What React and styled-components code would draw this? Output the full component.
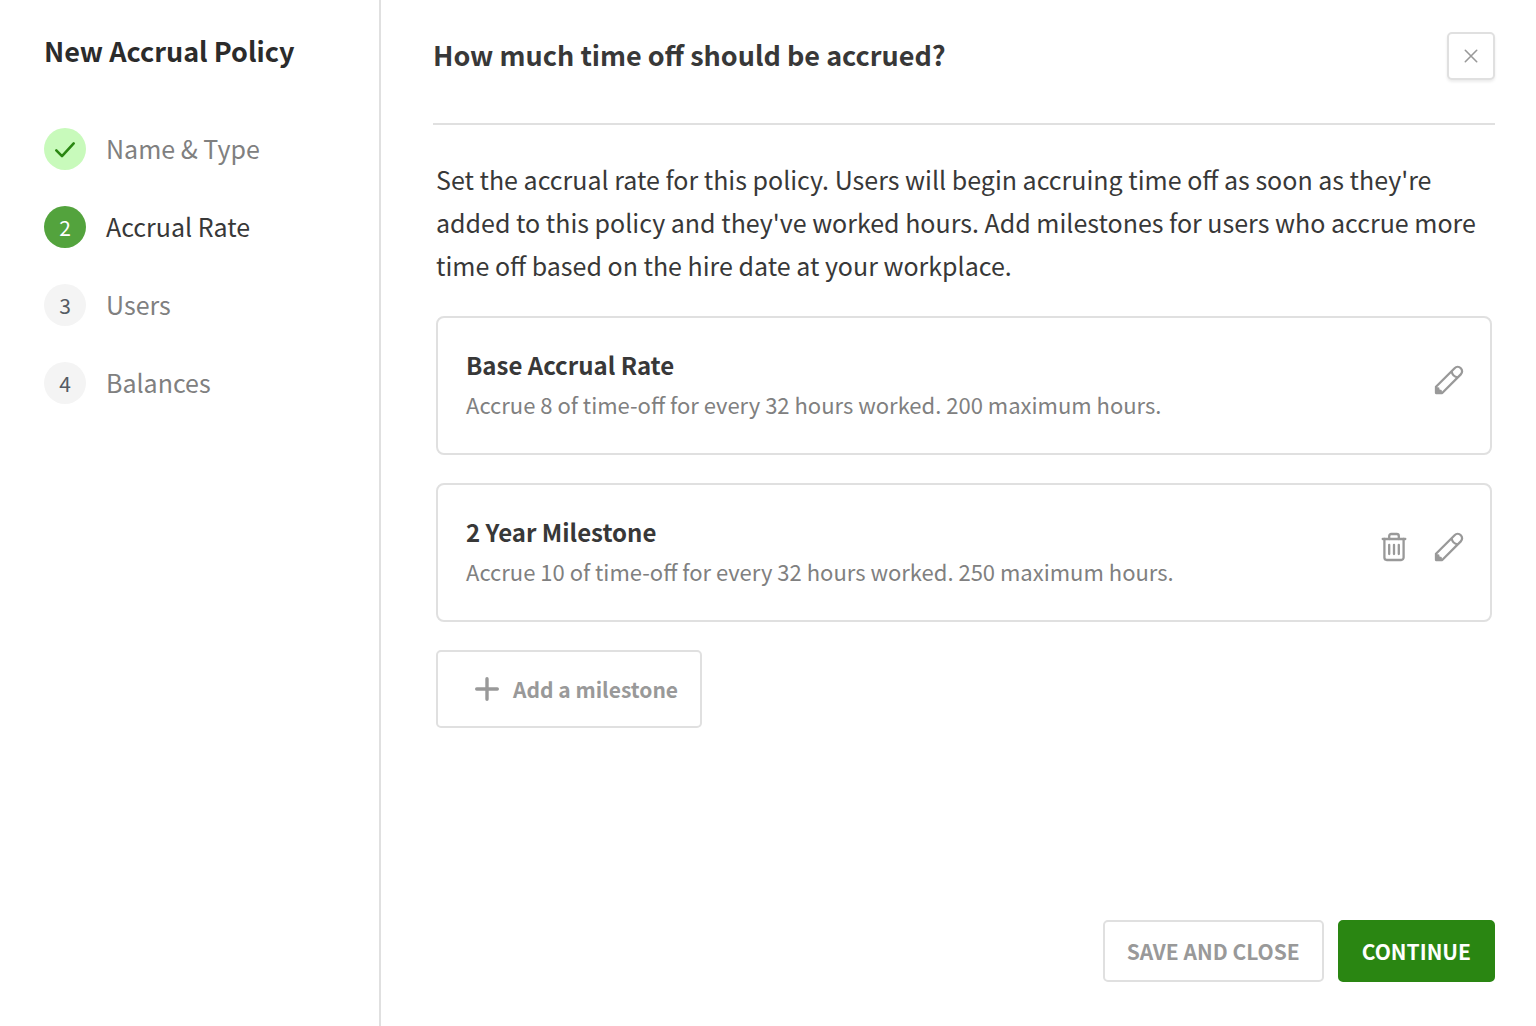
import React from "react";
import styled, { createGlobalStyle } from "styled-components";

const GlobalStyle = createGlobalStyle`
  * {
    box-sizing: border-box;
  }
  body {
    margin: 0;
    background-color: #ffffff;
    color: #383838;
    font-family: "Noto Sans CJK JP", "Noto Sans", sans-serif;
    font-size: 25px;
  }
  button {
    font-family: inherit;
    cursor: pointer;
  }
`;

const Page = styled.div`
  display: flex;
  min-height: 100vh;
`;

const Sidebar = styled.aside`
  flex: 0 0 381px;
  padding: 31px 44px;
  border-right: 2px solid #e0e0e0;
  h1 {
    margin: 0 0 57px;
    font-size: 27px;
    font-weight: 700;
    line-height: 40px;
    color: #2b2b2b;
  }
`;

const Steps = styled.ol`
  margin: 0;
  padding: 0;
  list-style: none;
  display: flex;
  flex-direction: column;
  gap: 36px;
`;

const Step = styled.li`
  display: flex;
  align-items: flex-start;
  gap: 20px;
  height: 42px;
  line-height: 40px;
  color: ${(props) => (props.$state === "current" ? "#383838" : "#808080")};
`;

const badgeColors = {
  done: "background-color: #c8fabb; color: #2a8612;",
  current: "background-color: #53a33d; color: #ffffff;",
  todo: "background-color: #f4f4f4; color: #555b63;",
};

const Badge = styled.span`
  flex: none;
  display: flex;
  align-items: center;
  justify-content: center;
  width: 42px;
  height: 42px;
  border-radius: 50%;
  font-size: 21px;
  ${(props) => badgeColors[props.$state]}
`;

const Main = styled.main`
  flex: 1;
  min-width: 0;
  display: flex;
  flex-direction: column;
  padding: 32px 41px 44px 52px;
`;

const Header = styled.header`
  display: flex;
  align-items: flex-start;
  justify-content: space-between;
  padding-bottom: 43px;
  border-bottom: 2px solid #e0e0e0;
  h2 {
    margin: 0;
    font-size: 27px;
    font-weight: 700;
    line-height: 46px;
  }
`;

const CloseButton = styled.button`
  display: flex;
  align-items: center;
  justify-content: center;
  width: 48px;
  height: 48px;
  padding: 0;
  border: 2px solid #e0e0e0;
  border-radius: 5px;
  background-color: #ffffff;
  color: #999999;
  box-shadow: 0 2px 3px rgba(0, 0, 0, 0.08);
`;

const Content = styled.div`
  display: flex;
  flex-direction: column;
  align-items: stretch;
  gap: 28px;
  padding: 33px 3px;
`;

const Intro = styled.p`
  margin: 0 0 1px;
  line-height: 43px;
`;

const Card = styled.section`
  display: flex;
  align-items: center;
  justify-content: space-between;
  padding: 27px 26px 29px 28px;
  border: 2px solid #e0e0e0;
  border-radius: 8px;
  h3 {
    margin: 0;
    font-size: 24px;
    font-weight: 700;
    line-height: 40px;
  }
  p {
    margin: 0;
    font-size: 22px;
    line-height: 39px;
    color: #808080;
  }
`;

const CardActions = styled.div`
  display: flex;
  gap: 27px;
  padding-bottom: 10px;
`;

const IconButton = styled.button`
  display: flex;
  padding: 0;
  border: none;
  background: none;
  color: #999999;
`;

const AddButton = styled.button`
  align-self: flex-start;
  display: flex;
  align-items: center;
  gap: 13px;
  padding: 18px 22px 18px 36px;
  border: 2px solid #e0e0e0;
  border-radius: 5px;
  background-color: #ffffff;
  color: #999999;
  font-size: 21px;
  font-weight: 700;
  line-height: 38px;
`;

const Footer = styled.footer`
  display: flex;
  justify-content: flex-end;
  gap: 14px;
  margin-top: auto;
`;

const FooterButton = styled.button`
  padding: 10px 22px;
  border: 2px solid ${(props) => (props.$primary ? "#2a8612" : "#e0e0e0")};
  border-radius: 5px;
  background-color: ${(props) => (props.$primary ? "#2a8612" : "#ffffff")};
  color: ${(props) => (props.$primary ? "#ffffff" : "#999999")};
  font-size: 21px;
  font-weight: 700;
  line-height: 38px;
`;

const CheckIcon = () => (
  <svg width="22" height="18" viewBox="0 0 22 18" fill="none" stroke="currentColor" strokeWidth="2.6" strokeLinecap="round" strokeLinejoin="round">
    <path d="M2.3 10.4 L8 16.1 L19.7 3.4" />
  </svg>
);

const CloseIcon = () => (
  <svg width="14" height="14" viewBox="0 0 14 14" fill="none" stroke="currentColor" strokeWidth="1.6" strokeLinecap="round">
    <path d="M1.3 1.3 L12.7 12.7 M12.7 1.3 L1.3 12.7" />
  </svg>
);

const PencilIcon = () => (
  <svg width="30" height="30" viewBox="0 0 30 30" fill="none" stroke="currentColor" strokeWidth="2.3" strokeLinejoin="round">
    <path d="M2 28 V21.8 L20.6 3.2 A4.35 4.35 0 0 1 26.8 9.4 L8.2 28 Z" />
    <path d="M17.6 6.4 A7.5 7.5 0 0 0 23.6 12.4" />
    <path d="M2 22 L5.2 22.6 L5.6 24.6 L7.6 25 L8.2 28 H2 Z" fill="currentColor" stroke="none" />
  </svg>
);

const TrashIcon = () => (
  <svg width="26" height="30" viewBox="0 0 26 30" fill="none" stroke="currentColor" strokeWidth="2.3" strokeLinecap="round" strokeLinejoin="round">
    <path d="M1.7 7 H24.3" />
    <path d="M8.2 7 V4 A2 2 0 0 1 10.2 2 H15.8 A2 2 0 0 1 17.8 4 V7" />
    <path d="M3.4 7 V25.6 A2.4 2.4 0 0 0 5.8 28 H20.2 A2.4 2.4 0 0 0 22.6 25.6 V7" />
    <path d="M8.2 12.8 V22 M13 12.8 V22 M17.8 12.8 V22" />
  </svg>
);

const PlusIcon = () => (
  <svg width="26" height="26" viewBox="0 0 26 26" fill="none" stroke="currentColor" strokeWidth="3.4" strokeLinecap="round">
    <path d="M13 2.7 V23.3 M2.7 13 H23.3" />
  </svg>
);

const steps = [
  { label: "Name & Type", state: "done" },
  { label: "Accrual Rate", state: "current" },
  { label: "Users", state: "todo" },
  { label: "Balances", state: "todo" },
];

const rates = [
  {
    title: "Base Accrual Rate",
    text: "Accrue 8 of time-off for every 32 hours worked. 200 maximum hours.",
    removable: false,
  },
  {
    title: "2 Year Milestone",
    text: "Accrue 10 of time-off for every 32 hours worked. 250 maximum hours.",
    removable: true,
  },
];

const App = () => {
  return (
    <>
      <GlobalStyle />
      <Page>
        <Sidebar>
          <h1>New Accrual Policy</h1>
          <Steps>
            {steps.map((step, index) => (
              <Step key={step.label} $state={step.state}>
                <Badge $state={step.state}>
                  {step.state === "done" ? <CheckIcon /> : index + 1}
                </Badge>
                {step.label}
              </Step>
            ))}
          </Steps>
        </Sidebar>
        <Main>
          <Header>
            <h2>How much time off should be accrued?</h2>
            <CloseButton type="button" aria-label="Close">
              <CloseIcon />
            </CloseButton>
          </Header>
          <Content>
            <Intro>
              Set the accrual rate for this policy. Users will begin accruing
              time off as soon as they're added to this policy and they've
              worked hours. Add milestones for users who accrue more time off
              based on the hire date at your workplace.
            </Intro>
            {rates.map((rate) => (
              <Card key={rate.title}>
                <div>
                  <h3>{rate.title}</h3>
                  <p>{rate.text}</p>
                </div>
                <CardActions>
                  {rate.removable && (
                    <IconButton type="button" aria-label="Delete">
                      <TrashIcon />
                    </IconButton>
                  )}
                  <IconButton type="button" aria-label="Edit">
                    <PencilIcon />
                  </IconButton>
                </CardActions>
              </Card>
            ))}
            <AddButton type="button">
              <PlusIcon />
              Add a milestone
            </AddButton>
          </Content>
          <Footer>
            <FooterButton type="button">SAVE AND CLOSE</FooterButton>
            <FooterButton type="button" $primary>
              CONTINUE
            </FooterButton>
          </Footer>
        </Main>
      </Page>
    </>
  );
};

export default App;
